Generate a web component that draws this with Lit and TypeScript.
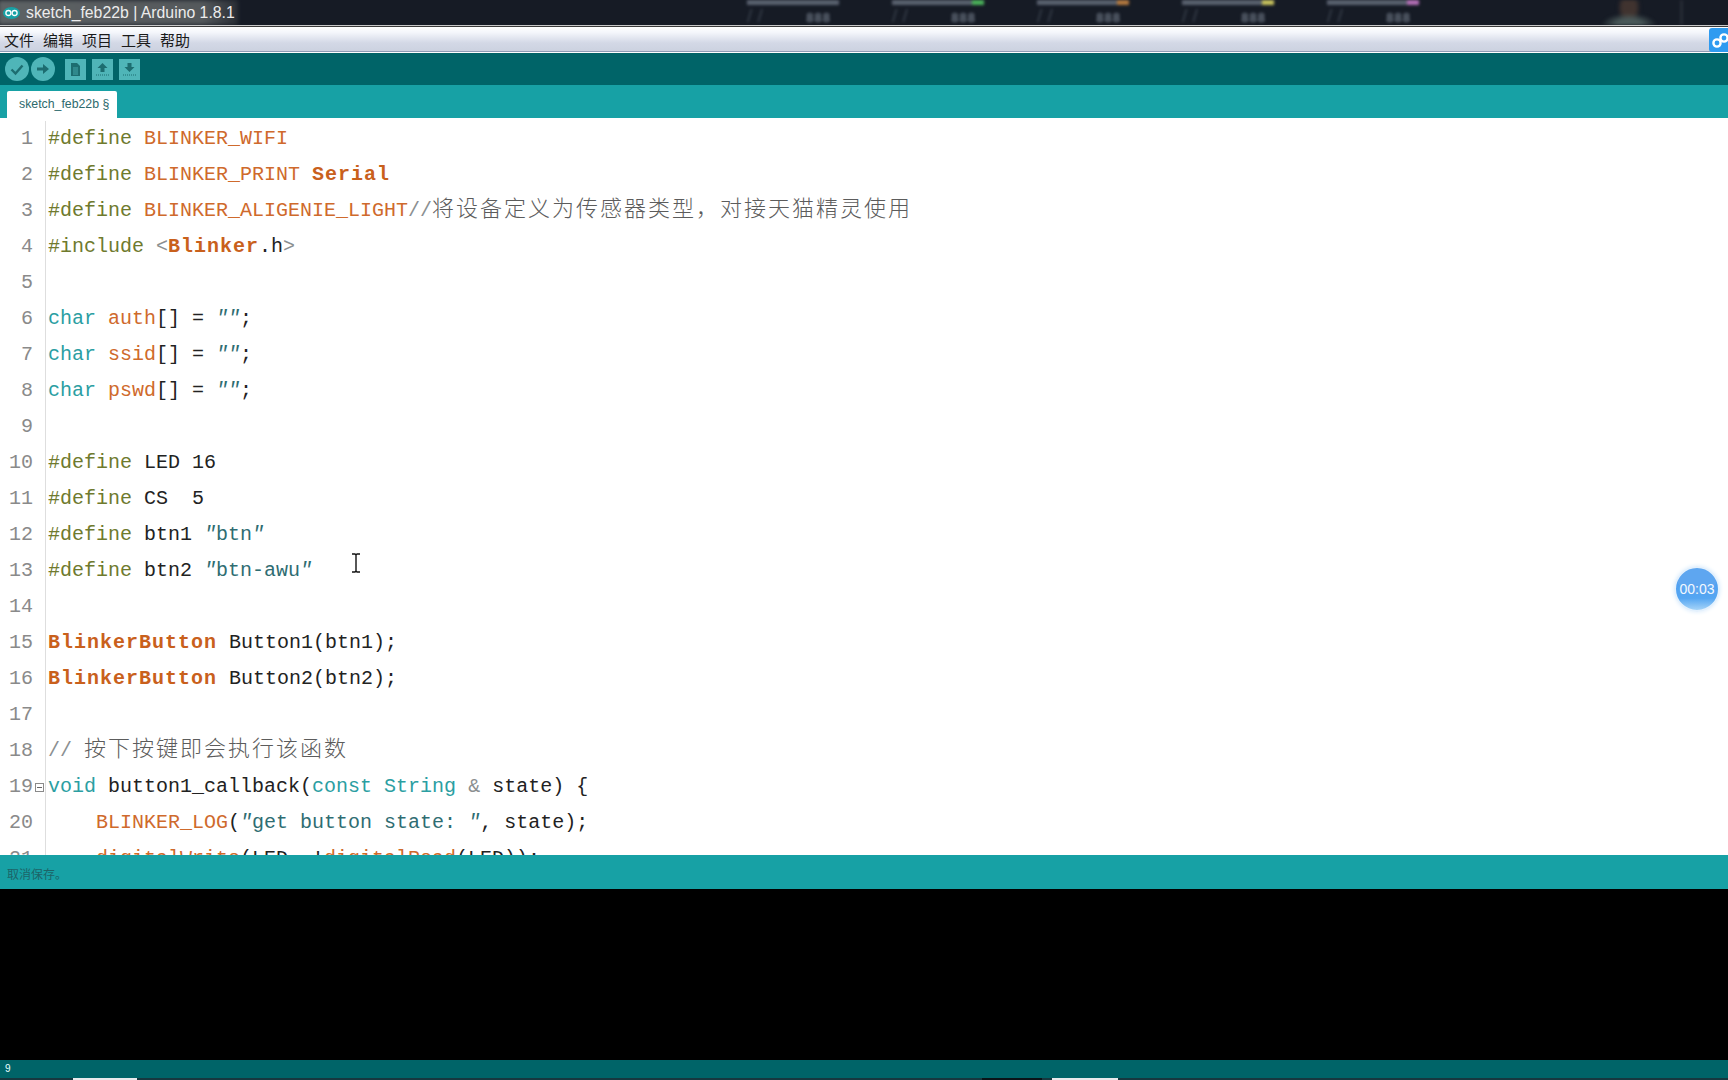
import { LitElement, html, css, svg } from "lit";
import { customElement } from "lit/decorators.js";

type Tok = [string, string?];
const d: Tok = ["#define", "pp"];
const LINES: Tok[][] = [
  [d, [" "], ["BLINKER_WIFI", "fn"]],
  [d, [" "], ["BLINKER_PRINT", "fn"], [" "], ["Serial", "bd"]],
  [d, [" "], ["BLINKER_ALIGENIE_LIGHT", "fn"], ["//", "cm"], ["将设备定义为传感器类型，对接天猫精灵使用", "cj"]],
  [["#include", "pp"], [" "], ["<", "cm"], ["Blinker", "bd"], [".h"], [">", "cm"]],
  [],
  [["char", "kw"], [" "], ["auth", "fn"], ["[] = "], ["\"\"", "st"], [";"]],
  [["char", "kw"], [" "], ["ssid", "fn"], ["[] = "], ["\"\"", "st"], [";"]],
  [["char", "kw"], [" "], ["pswd", "fn"], ["[] = "], ["\"\"", "st"], [";"]],
  [],
  [d, [" LED 16"]],
  [d, [" CS  5"]],
  [d, [" btn1 "], ["\"btn\"", "st"]],
  [d, [" btn2 "], ["\"btn-awu\"", "st"]],
  [],
  [["BlinkerButton", "bd"], [" Button1(btn1);"]],
  [["BlinkerButton", "bd"], [" Button2(btn2);"]],
  [],
  [["// ", "cm"], ["按下按键即会执行该函数", "cj"]],
  [["void", "kw"], [" button1_callback("], ["const", "kw"], [" "], ["String", "kw"], [" "], ["&", "cm"], [" state) {"]],
  [["    "], ["BLINKER_LOG", "fn"], ["("], ["\"get button state: \"", "st"], [", state);"]],
  [["    "], ["digitalWrite", "fn"], ["(LED, !"], ["digitalRead", "fn"], ["(LED));"]],
];

const BLURS = ["", "#4bb25a", "#b5793f", "#c9c45e", "#b56fb8"];

@customElement("app-root")
export class AppRoot extends LitElement {
  static styles = css`
    :host { display: block; width: 1728px; height: 1080px; overflow: hidden; position: relative; background: #000; font-family: "Liberation Sans", "Noto Sans CJK SC", sans-serif; }
    .title { height: 25px; background: #161b25; display: flex; position: relative; overflow: hidden; }
    .glow { width: 240px; height: 25px; flex: none; background: linear-gradient(90deg, #5d6264, #55595c 85%, #2a2e35); filter: blur(2px); margin-left: -2px; }
    .tname { position: absolute; left: 3px; top: 0; height: 25px; display: flex; align-items: center; gap: 6px; color: #ececec; font-size: 15.8px; white-space: nowrap; }
    .desk { display: flex; margin-left: 509px; filter: blur(1.4px); }
    .win { width: 92px; margin-right: 53px; flex: none; height: 25px; display: flex; flex-direction: column; justify-content: space-between; }
    .winbar { height: 5px; background: #5a6270; display: flex; justify-content: flex-end; }
    .winbar i { width: 12px; display: block; }
    .wintext { height: 17px; display: flex; justify-content: space-between; align-items: flex-end; padding-right: 8px; color: #6a7380; font: bold 13px/15px "Liberation Sans", sans-serif; letter-spacing: 1px; }
    .slash { color: #3a424e; font-weight: normal; font-size: 19px; line-height: 19px; letter-spacing: 0; }
    .person { width: 58px; height: 25px; margin-left: 128px; flex: none; background: radial-gradient(ellipse 28px 12px at 50% 100%, #4b5a5a 0 45%, transparent 100%), radial-gradient(ellipse 12px 18px at 50% 30%, #40332f 0 55%, transparent 100%); }
    .vline { width: 3px; height: 25px; margin-left: 22px; flex: none; background: #262b35; }
    .menu { height: 28px; box-sizing: border-box; border-top: 1px solid #c9c9c9; border-bottom: 1px solid #fff; background: linear-gradient(#3a3a3a 0 1px, #ffffff 1px, #f4f6fb 25%, #d3d8e6 65%, #ccd2e0 calc(100% - 1px), #8e9cb6 calc(100% - 1px)); display: flex; align-items: center; padding-left: 4px; gap: 9px; font-size: 15px; color: #1a1a1a; position: relative; }
    .badge { position: absolute; right: 0; top: 2px; width: 19px; height: 24px; background: #2f9bf0; border-radius: 3px 0 0 3px; overflow: hidden; }
    .toolbar { height: 32px; background: #006468; display: flex; align-items: center; padding-left: 5px; }
    .toolbar svg { display: block; }
    .rnd { margin-right: 2px; }
    .sq { margin-right: 6px; }
    .gap { width: 8px; }
    .tabs { height: 33px; background: #17a1a5; box-sizing: border-box; padding: 6px 0 0 7px; display: flex; }
    .tab { width: 110px; height: 27px; background: #fff; border-radius: 2px 2px 0 0; box-sizing: border-box; padding-left: 12px; font-size: 12.3px; color: #2d6a6d; line-height: 26px; white-space: nowrap; }
    .editor { height: 737px; background: #fff; overflow: hidden; box-sizing: border-box; padding-top: 3px; font: 20px/36px "Liberation Mono", monospace; color: #222; }
    .row { display: grid; grid-template-columns: 33px 12px 1fr; height: 36px; }
    .num { text-align: right; color: #8a8a8a; }
    .foldcell { display: flex; align-items: center; justify-content: center; }
    .fold { width: 9px; height: 9px; box-sizing: border-box; border: 1px solid #8a8a8a; position: relative; }
    .fold::after { content: ""; position: absolute; left: 1px; right: 1px; top: 3px; height: 1px; background: #666; }
    .code { border-left: 1px solid #dedede; padding-left: 2px; white-space: pre; }
    .pp { color: #6f7a2e; }
    .fn { color: #cf6a2c; }
    .bd { color: #c9601c; font-weight: bold; letter-spacing: 1px; }
    .kw { color: #2b9ea2; }
    .st { color: #2f6d72; }
    .q { font-style: italic; }
    .cm { color: #8b8f91; }
    .cj { color: #5c5c5c; font: 300 22px/0 "Noto Sans CJK SC", sans-serif; letter-spacing: 2px; }
    .status { height: 34px; background: #17a1a5; box-sizing: border-box; padding: 11px 0 0 7px; font-size: 12px; line-height: 18px; color: #1d6468; }
    .console { height: 171px; background: #000; }
    .foot { height: 18px; background: #006468; color: #e8ffff; font-size: 10px; line-height: 18px; padding-left: 5px; }
    .strip { height: 2px; background: #16383f; display: flex; }
    .strip i { height: 2px; background: #e8eaec; display: block; flex: none; }
    .caret { position: absolute; left: 350px; top: 553px; }
    .timer { position: absolute; left: 1674px; top: 566px; width: 46px; height: 46px; box-sizing: border-box; border-radius: 50%; border: 2px solid #e4f1fd; background: radial-gradient(circle at 50% 10%, #5ea6f0 0 50%, transparent 51%), linear-gradient(#4b9bef, #55a6f2 72%, #a6d4f8); color: #f2f8ff; font-size: 14px; display: flex; align-items: center; justify-content: center; box-shadow: 0 0 4px #d8ebfb; }
  `;

  private token(t: Tok) {
    if (t[1] !== "st") return html`<span class=${t[1] ?? ""}>${t[0]}</span>`;
    const parts = t[0].split('"');
    return html`<span class="st">${parts.map((p, i) =>
      i === 0 ? p : html`<span class="q">"</span>${p}`
    )}</span>`;
  }

  private row(toks: Tok[], i: number) {
    return html`<div class="row">
      <div class="num">${i + 1}</div>
      <div class="foldcell">${i === 18 ? html`<div class="fold"></div>` : ""}</div>
      <div class="code">${toks.map((t) => this.token(t))}</div>
    </div>`;
  }

  private logo() {
    return html`<svg width="17" height="12" viewBox="0 0 17 12"><ellipse cx="8.5" cy="6" rx="8.5" ry="6" fill="#17a1a5"/>${svg`<circle cx="5.4" cy="6" r="2.5" fill="none" stroke="#fff" stroke-width="1.3"/><circle cx="11.6" cy="6" r="2.5" fill="none" stroke="#fff" stroke-width="1.3"/>`}</svg>`;
  }

  private round(inner: unknown) {
    return html`<svg class="rnd" width="24" height="24" viewBox="0 0 24 24"><circle cx="12" cy="12" r="12" fill="#4fb5b8"/>${inner}</svg>`;
  }

  private square(inner: unknown) {
    return html`<svg class="sq" width="21" height="21" viewBox="0 0 21 21"><rect width="21" height="21" fill="#4fb5b8"/>${inner}</svg>`;
  }

  render() {
    return html`
      <div class="title">
        <div class="glow"></div>
        <div class="desk">
          ${BLURS.map((c) => html`<div class="win">
            <div class="winbar"><i style="background:${c || "#5a6270"}"></i></div>
            <div class="wintext"><span class="slash">/ /</span><span>888</span></div>
          </div>`)}
          <div class="person"></div>
          <div class="vline"></div>
        </div>
        <div class="tname">${this.logo()}<span>sketch_feb22b | Arduino 1.8.1</span></div>
      </div>
      <div class="menu">
        <span>文件</span><span>编辑</span><span>项目</span><span>工具</span><span>帮助</span>
        <div class="badge">
          <svg width="19" height="24" viewBox="0 0 19 24">
            <g fill="none" stroke="#fff" stroke-width="2.4"><circle cx="8" cy="15" r="3.6"/><circle cx="15" cy="10" r="3.6"/></g>
          </svg>
        </div>
      </div>
      <div class="toolbar">
        ${this.round(svg`<path d="M6.5 12.5l4 4 7-8" fill="none" stroke="#1d6d70" stroke-width="2.4"/>`)}
        ${this.round(svg`<path d="M6 10.5h6V7l6 5-6 5v-3.5H6z" fill="#1d6d70"/>`)}
        <div class="gap"></div>
        ${this.square(svg`<path d="M6 4h6l3 3v10H6z" fill="#1d6d70"/><path d="M8 9h5M8 11h5M8 13h5M8 15h5" stroke="#4fb5b8" stroke-width=".8"/>`)}
        ${this.square(svg`<path d="M10.5 4l5 5h-3v4h-4V9h-3z" fill="#1d6d70"/><path d="M4 16h13" stroke="#1d6d70" stroke-dasharray="1 1"/>`)}
        ${this.square(svg`<path d="M10.5 13l5-5h-3V4h-4v4h-3z" fill="#1d6d70"/><path d="M4 16h13" stroke="#1d6d70" stroke-dasharray="1 1"/>`)}
      </div>
      <div class="tabs"><div class="tab">sketch_feb22b §</div></div>
      <div class="editor">${LINES.map((l, i) => this.row(l, i))}</div>
      <div class="status">取消保存。</div>
      <div class="console"></div>
      <div class="foot">9</div>
      <div class="strip">
        <i style="width:73px;background:#16383f"></i><i style="width:64px"></i>
        <i style="width:845px;background:#16383f"></i><i style="width:60px;background:#0a1418"></i>
        <i style="width:10px;background:#16383f"></i><i style="width:66px"></i>
      </div>
      <svg class="caret" width="12" height="20" viewBox="0 0 12 20"><path d="M2 1h3l1 1 1-1h3M6 2v16M2 19h3l1-1 1 1h3" fill="none" stroke="#111" stroke-width="1.4"/></svg>
      <div class="timer">00:03</div>
    `;
  }
}
